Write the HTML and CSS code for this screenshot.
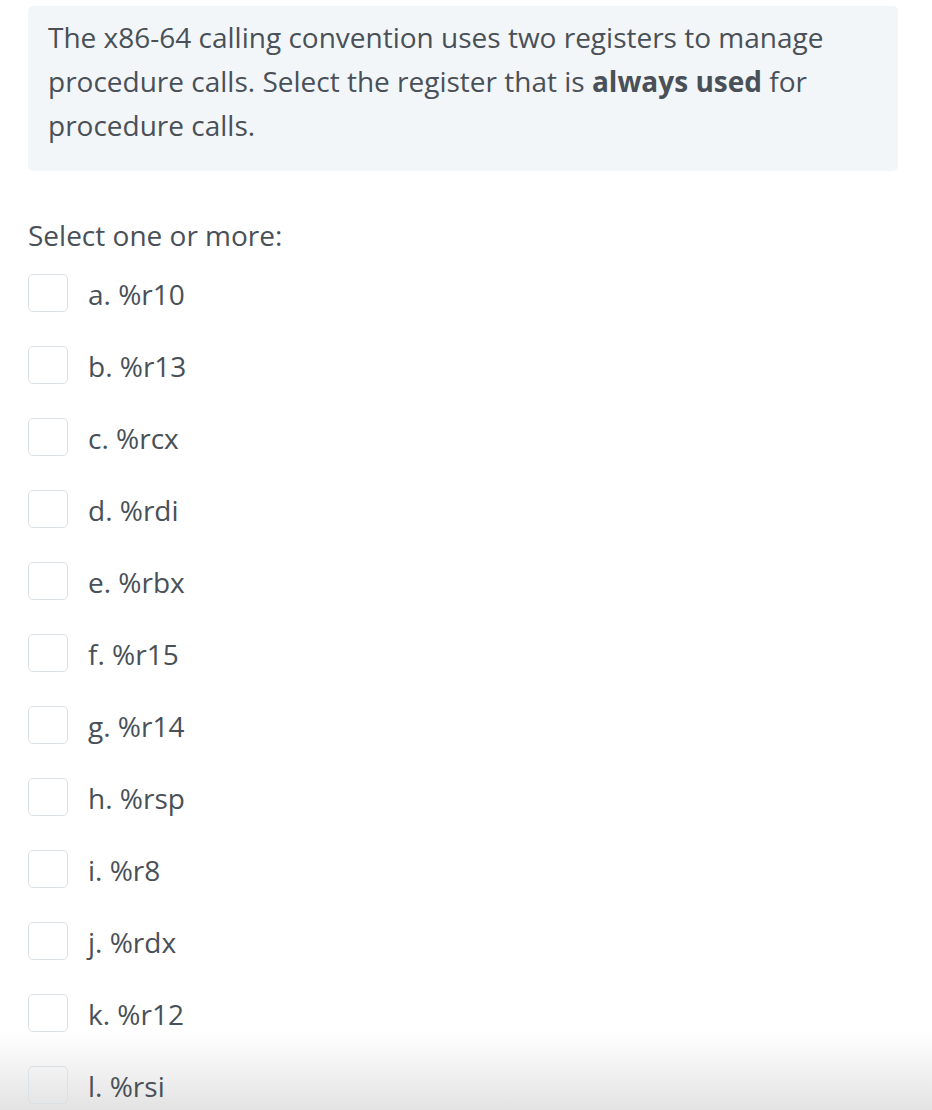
FILE: index.html
```html
<!DOCTYPE html>
<html>
<head>
<meta charset="utf-8">
<link rel="stylesheet" href="styles.css">
</head>
<body>
<div class="question">
  <div class="qtext">The x86-64 calling convention uses two registers to manage procedure calls. Select the register that is <strong>always used</strong> for procedure calls.</div>
</div>
<div class="prompt">Select one or more:</div>
<div class="answers">
  <label class="opt"><span class="box"></span><span class="lbl">a. %r10</span></label>
  <label class="opt"><span class="box"></span><span class="lbl">b. %r13</span></label>
  <label class="opt"><span class="box"></span><span class="lbl">c. %rcx</span></label>
  <label class="opt"><span class="box"></span><span class="lbl">d. %rdi</span></label>
  <label class="opt"><span class="box"></span><span class="lbl">e. %rbx</span></label>
  <label class="opt"><span class="box"></span><span class="lbl">f. %r15</span></label>
  <label class="opt"><span class="box"></span><span class="lbl">g. %r14</span></label>
  <label class="opt"><span class="box"></span><span class="lbl">h. %rsp</span></label>
  <label class="opt"><span class="box"></span><span class="lbl">i. %r8</span></label>
  <label class="opt"><span class="box"></span><span class="lbl">j. %rdx</span></label>
  <label class="opt"><span class="box"></span><span class="lbl">k. %r12</span></label>
  <label class="opt"><span class="box"></span><span class="lbl">l. %rsi</span></label>
</div>
</body>
</html>
```
FILE: styles.css
```css
html {
  margin: 0;
  padding: 0;
  height: 1110px;
  overflow: hidden;
  background: #ffffff linear-gradient(to bottom, #ffffff 0%, #e3e3e3 100%) no-repeat left bottom / 100% 78px;
}
body {
  margin: 0;
  font-family: "Open Sans", "Liberation Sans", sans-serif;
  color: #495057;
  font-size: 28px;
  line-height: 44px;
  padding: 6px 34px 0 28px;
}
.question {
  background: #f3f6f9;
  border-radius: 5px;
  padding: 9px 20px 24px 20px;
}
.qtext strong {
  font-weight: 700;
}
.prompt {
  margin-top: 42px;
}
.answers {
  display: flex;
  flex-direction: column;
  margin-top: 1px;
}
.opt {
  display: flex;
  align-items: center;
  height: 72px;
}
.box {
  width: 38px;
  height: 36px;
  border: 1px solid #dbe0e4;
  border-radius: 5px;
  background: transparent;
  flex: none;
  margin-top: -2px;
}
.lbl {
  margin-left: 20px;
}
```
